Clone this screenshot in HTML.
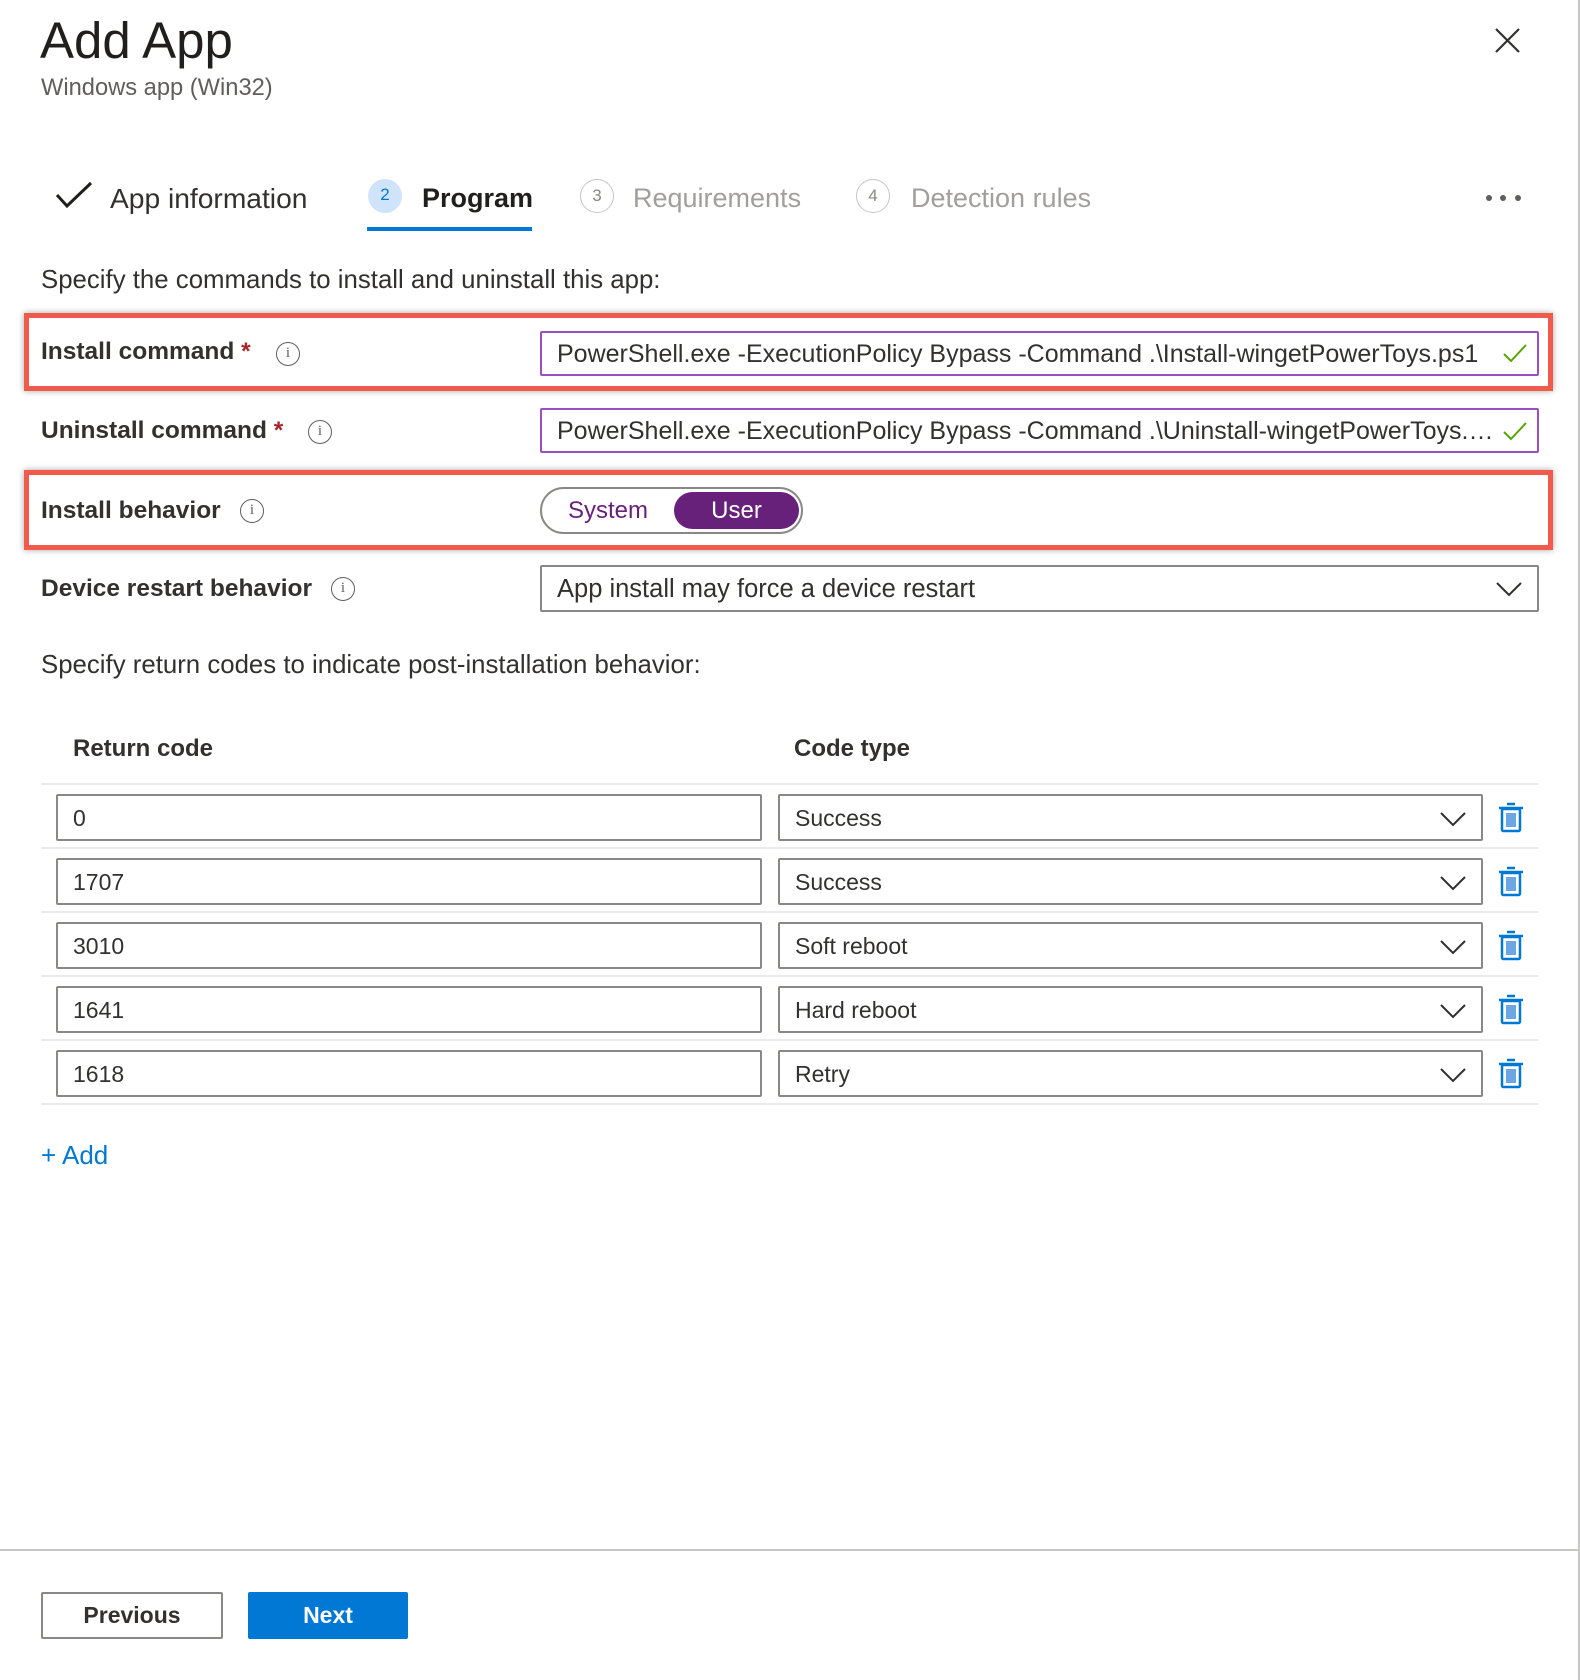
<!DOCTYPE html>
<html><head><meta charset="utf-8"><style>
*{margin:0;padding:0;box-sizing:border-box}
body{width:1580px;height:1680px;background:#fff;position:relative;overflow:hidden;font-family:"Liberation Sans",sans-serif;color:#323130}
.a{position:absolute;white-space:nowrap}
.lbl{font-size:24.5px;font-weight:bold;color:#323130;line-height:30px}
.inp{position:absolute;border:2px solid #8a8886;border-radius:2px;background:#fff;font-size:23px;line-height:26px;padding-left:15px;display:flex;align-items:center;overflow:hidden;white-space:nowrap}
.big{font-size:25px}
.pur{border-color:#9b4fc6}
.info{position:absolute;width:24px;height:24px;border:1.5px solid #605e5c;border-radius:50%;font-size:15px;line-height:21px;text-align:center;color:#605e5c;font-family:"Liberation Serif",serif}
.red{position:absolute;border:5px solid #f25a4c;box-shadow:0 0 6px rgba(0,0,0,.35)}
.circ{position:absolute;width:34px;height:34px;border-radius:50%;font-size:17px;line-height:32px;text-align:center}
.sep{position:absolute;left:41px;width:1498px;height:2px;background:#edebe9}
.chev{position:absolute;width:26px;height:16px}
</style></head><body>
<div style="position:absolute;right:0;top:0;width:2px;height:1680px;background:#c8c6c4"></div>
<div class="a" style="left:40px;top:10px;font-size:51px;line-height:62px;color:#201f1e">Add App</div>
<div class="a" style="left:41px;top:74px;font-size:23.7px;line-height:28px;color:#605e5c">Windows app (Win32)</div>
<svg class="a" style="left:1494px;top:27px" width="27" height="27" viewBox="0 0 27 27"><path d="M2 2L25 25M25 2L2 25" stroke="#323130" stroke-width="2.2"/></svg>

<svg class="a" style="left:55px;top:181px" width="38" height="28" viewBox="0 0 38 28"><path d="M2 14L12 25L36 2" stroke="#201f1e" stroke-width="3" fill="none"/></svg>
<div class="a" style="left:110px;top:182px;font-size:28.2px;line-height:32px;color:#323130">App information</div>
<div class="circ" style="left:368px;top:179px;background:#cfe4fa;color:#0078d4">2</div>
<div class="a" style="left:422px;top:182px;font-size:27px;line-height:32px;font-weight:bold;color:#201f1e">Program</div>
<div class="a" style="left:367px;top:227px;width:165px;height:4px;background:#0078d4"></div>
<div class="circ" style="left:580px;top:179px;border:1.5px solid #c8c6c4;color:#8a8886">3</div>
<div class="a" style="left:633px;top:182px;font-size:27px;line-height:32px;color:#a19f9d">Requirements</div>
<div class="circ" style="left:856px;top:179px;border:1.5px solid #c8c6c4;color:#8a8886">4</div>
<div class="a" style="left:911px;top:182px;font-size:27px;line-height:32px;color:#a19f9d">Detection rules</div>
<div class="a" style="left:1486px;top:195px;width:6px;height:6px;border-radius:50%;background:#605e5c"></div>
<div class="a" style="left:1500px;top:195px;width:6px;height:6px;border-radius:50%;background:#605e5c"></div>
<div class="a" style="left:1515px;top:195px;width:6px;height:6px;border-radius:50%;background:#605e5c"></div>

<div class="a" style="left:41px;top:265px;font-size:25.8px;line-height:30px;color:#323130">Specify the commands to install and uninstall this app:</div>

<div class="red" style="left:24px;top:313px;width:1529px;height:78px"></div>
<div class="red" style="left:24px;top:470px;width:1529px;height:80px"></div>

<div class="a lbl" style="left:41px;top:337px">Install command <span style="color:#a4262c">*</span></div>
<div class="info" style="left:276px;top:342px">i</div>
<div class="inp pur big" style="left:540px;top:331px;width:999px;height:45px">PowerShell.exe -ExecutionPolicy Bypass -Command .\Install-wingetPowerToys.ps1</div>
<svg class="a" style="left:1502px;top:343px" width="26" height="20" viewBox="0 0 26 20"><path d="M2 11L9 18L24 2" stroke="#57a300" stroke-width="2" fill="none"/></svg>

<div class="a lbl" style="left:41px;top:416px">Uninstall command <span style="color:#a4262c">*</span></div>
<div class="info" style="left:308px;top:420px">i</div>
<div class="inp pur big" style="left:540px;top:408px;width:999px;height:45px"><span style="display:block;width:938px;overflow:hidden;text-overflow:ellipsis">PowerShell.exe -ExecutionPolicy Bypass -Command .\Uninstall-wingetPowerToys.ps1</span></div>
<svg class="a" style="left:1502px;top:421px" width="26" height="20" viewBox="0 0 26 20"><path d="M2 11L9 18L24 2" stroke="#57a300" stroke-width="2" fill="none"/></svg>

<div class="a lbl" style="left:41px;top:496px">Install behavior</div>
<div class="info" style="left:240px;top:499px">i</div>
<div class="a" style="left:540px;top:487px;width:263px;height:47px;border:2px solid #8a8886;border-radius:24px"></div>
<div class="a" style="left:568px;top:496px;font-size:24px;line-height:30px;color:#68217a">System</div>
<div class="a" style="left:674px;top:492px;width:125px;height:37px;border-radius:19px;background:#68217a;color:#fff;font-size:24px;line-height:37px;text-align:center">User</div>

<div class="a lbl" style="left:41px;top:574px">Device restart behavior</div>
<div class="info" style="left:331px;top:577px">i</div>
<div class="inp" style="left:540px;top:565px;width:999px;height:47px;font-size:25.5px">App install may force a device restart</div>
<svg class="chev" style="left:1496px;top:581px" viewBox="0 0 26 16"><path d="M1 2L13 14L25 2" stroke="#323130" stroke-width="2" fill="none"/></svg>

<div class="a" style="left:41px;top:650px;font-size:25.8px;line-height:30px;color:#323130">Specify return codes to indicate post-installation behavior:</div>

<div class="a lbl" style="left:73px;top:734px;font-size:24px">Return code</div>
<div class="a lbl" style="left:794px;top:734px;font-size:24px">Code type</div>
<div class="sep" style="top:783px"></div>

<div class="inp" style="left:56px;top:794px;width:706px;height:47px">0</div>
<div class="inp" style="left:778px;top:794px;width:705px;height:47px">Success</div>
<div class="sep" style="top:847px"></div>
<div class="inp" style="left:56px;top:858px;width:706px;height:47px">1707</div>
<div class="inp" style="left:778px;top:858px;width:705px;height:47px">Success</div>
<div class="sep" style="top:911px"></div>
<div class="inp" style="left:56px;top:922px;width:706px;height:47px">3010</div>
<div class="inp" style="left:778px;top:922px;width:705px;height:47px">Soft reboot</div>
<div class="sep" style="top:975px"></div>
<div class="inp" style="left:56px;top:986px;width:706px;height:47px">1641</div>
<div class="inp" style="left:778px;top:986px;width:705px;height:47px">Hard reboot</div>
<div class="sep" style="top:1039px"></div>
<div class="inp" style="left:56px;top:1050px;width:706px;height:47px">1618</div>
<div class="inp" style="left:778px;top:1050px;width:705px;height:47px">Retry</div>
<div class="sep" style="top:1103px"></div>

<svg class="chev" style="left:1440px;top:811px" viewBox="0 0 26 16"><path d="M1 2L13 14L25 2" stroke="#323130" stroke-width="2" fill="none"/></svg>
<svg class="chev" style="left:1440px;top:875px" viewBox="0 0 26 16"><path d="M1 2L13 14L25 2" stroke="#323130" stroke-width="2" fill="none"/></svg>
<svg class="chev" style="left:1440px;top:939px" viewBox="0 0 26 16"><path d="M1 2L13 14L25 2" stroke="#323130" stroke-width="2" fill="none"/></svg>
<svg class="chev" style="left:1440px;top:1003px" viewBox="0 0 26 16"><path d="M1 2L13 14L25 2" stroke="#323130" stroke-width="2" fill="none"/></svg>
<svg class="chev" style="left:1440px;top:1067px" viewBox="0 0 26 16"><path d="M1 2L13 14L25 2" stroke="#323130" stroke-width="2" fill="none"/></svg>

<svg class="a" style="left:1497px;top:801px" width="28" height="32" viewBox="0 0 28 32"><path d="M10 3H18M2 7H26" stroke="#0078d4" stroke-width="2.5"/><rect x="5" y="8" width="18" height="22" rx="1.5" fill="#fff" stroke="#0078d4" stroke-width="2.5"/><rect x="9" y="12" width="10" height="14" fill="#6aa7e3"/></svg>
<svg class="a" style="left:1497px;top:865px" width="28" height="32" viewBox="0 0 28 32"><path d="M10 3H18M2 7H26" stroke="#0078d4" stroke-width="2.5"/><rect x="5" y="8" width="18" height="22" rx="1.5" fill="#fff" stroke="#0078d4" stroke-width="2.5"/><rect x="9" y="12" width="10" height="14" fill="#6aa7e3"/></svg>
<svg class="a" style="left:1497px;top:929px" width="28" height="32" viewBox="0 0 28 32"><path d="M10 3H18M2 7H26" stroke="#0078d4" stroke-width="2.5"/><rect x="5" y="8" width="18" height="22" rx="1.5" fill="#fff" stroke="#0078d4" stroke-width="2.5"/><rect x="9" y="12" width="10" height="14" fill="#6aa7e3"/></svg>
<svg class="a" style="left:1497px;top:993px" width="28" height="32" viewBox="0 0 28 32"><path d="M10 3H18M2 7H26" stroke="#0078d4" stroke-width="2.5"/><rect x="5" y="8" width="18" height="22" rx="1.5" fill="#fff" stroke="#0078d4" stroke-width="2.5"/><rect x="9" y="12" width="10" height="14" fill="#6aa7e3"/></svg>
<svg class="a" style="left:1497px;top:1057px" width="28" height="32" viewBox="0 0 28 32"><path d="M10 3H18M2 7H26" stroke="#0078d4" stroke-width="2.5"/><rect x="5" y="8" width="18" height="22" rx="1.5" fill="#fff" stroke="#0078d4" stroke-width="2.5"/><rect x="9" y="12" width="10" height="14" fill="#6aa7e3"/></svg>

<div class="a" style="left:41px;top:1140px;font-size:26px;line-height:30px;color:#0078d4">+ Add</div>

<div class="a" style="left:0;top:1549px;width:1580px;height:2px;background:#c8c6c4"></div>
<div class="a" style="left:41px;top:1592px;width:182px;height:47px;border:2px solid #8a8886;border-radius:2px;font-size:23px;line-height:43px;text-align:center;font-weight:bold;color:#323130">Previous</div>
<div class="a" style="left:248px;top:1592px;width:160px;height:47px;background:#0078d4;border-radius:2px;font-size:23px;line-height:47px;text-align:center;font-weight:bold;color:#fff">Next</div>
</body></html>
